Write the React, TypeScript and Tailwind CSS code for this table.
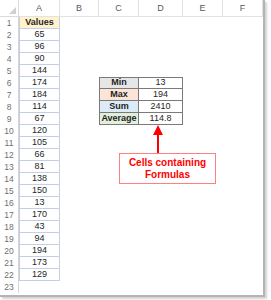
const values = [65, 96, 90, 144, 174, 184, 114, 67, 120, 105, 66, 81, 138, 150, 13, 170, 43, 94, 194, 173, 129];

const summary: Record<number, { label: string; value: string; bg: string }> = {
  6: { label: 'Min', value: '13', bg: 'bg-[#e7e6e6]' },
  7: { label: 'Max', value: '194', bg: 'bg-[#fce4d6]' },
  8: { label: 'Sum', value: '2410', bg: 'bg-[#ddebf7]' },
  9: { label: 'Average', value: '114.8', bg: 'bg-[#e2efda]' },
};

const columns = ['A', 'B', 'C', 'D', 'E', 'F'];

function Row({ n }: { n: number }) {
  const s = summary[n];
  const a = n === 1 ? 'Values' : n <= 22 ? String(values[n - 2]) : '';
  const inA = n <= 22;

  return (
    <>
      <div className="flex h-3 items-center justify-center border-r border-[#d4d4d4] text-[8.5px] text-[#707070]">{n}</div>
      <div
        className={`flex h-3 items-center justify-center text-[9px] ${
          inA ? 'border-x border-b border-[#c3cfe6]' : ''
        } ${n === 1 ? 'bg-[#fff2cc] font-bold text-[#1f1f1f]' : 'text-[#262626]'}`}
      >
        {a}
      </div>
      <div className="h-3" />
      {s ? (
        <>
          <div
            className={`flex h-3 items-center justify-center border-x border-b border-[#7a7a7a] text-[9px] font-bold text-[#1f1f1f] ${s.bg} ${
              n === 6 ? 'border-t' : ''
            }`}
          >
            {s.label}
          </div>
          <div
            className={`flex h-3 items-center justify-center border-r border-b border-[#7a7a7a] text-[9px] text-[#262626] ${
              n === 6 ? 'border-t' : ''
            }`}
          >
            {s.value}
          </div>
        </>
      ) : (
        <>
          <div className="h-3" />
          <div className="h-3" />
        </>
      )}
      <div className="h-3" />
      <div className="h-3" />
    </>
  );
}

function App() {
  const rows = Array.from({ length: 23 }, (_, i) => i + 1);

  return (
    <div className="relative h-[300px] w-[271px] overflow-hidden bg-white font-['Liberation_Sans',Arial,sans-serif]">
      <div className="h-[297px] w-[265px] border-r-2 border-b-2 border-[#b4b4b4] shadow-[2px_2px_2px_rgba(0,0,0,0.18)]">
        <div className="grid grid-cols-[19px_41px_39px_40px_44px_40px_40px]">
          <div className="relative h-[17px] border-r border-b border-[#dadada]">
            <svg className="absolute right-[2px] bottom-[2px]" width="7" height="7" viewBox="0 0 7 7">
              <path d="M7 0 L7 7 L0 7 Z" fill="#d0d0d0" />
            </svg>
          </div>
          {columns.map((c) => (
            <div
              key={c}
              className="flex h-[17px] items-end justify-center border-r border-b border-[#e2e2e2] pb-[1px] text-[9px] text-[#5a5a5a]"
            >
              {c}
            </div>
          ))}
          {rows.map((n) => (
            <Row key={n} n={n} />
          ))}
        </div>
      </div>

      {/* arrow pointing at the formula cells */}
      <svg className="absolute left-[152px] top-[125px]" width="12" height="29" viewBox="0 0 12 29">
        <path d="M6 0 L11 10 L7 10 L7 29 L5 29 L5 10 L1 10 Z" fill="#ff0000" />
      </svg>

      <div className="absolute left-[119px] top-[153px] flex h-[31px] w-[97px] flex-col items-center justify-center border-[1.5px] border-[#ff8080] bg-white text-[10px] leading-[12px] font-bold text-[#ff0000]">
        <span>Cells containing</span>
        <span>Formulas</span>
      </div>
    </div>
  );
}

export default App;
